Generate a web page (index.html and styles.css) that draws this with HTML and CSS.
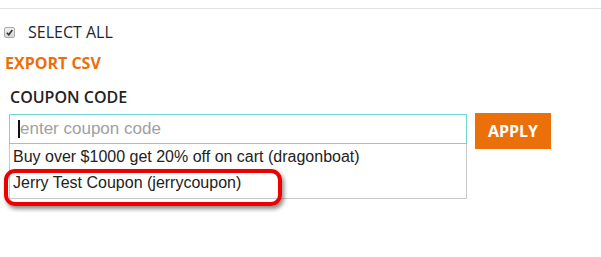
FILE: index.html
```html
<!DOCTYPE html>
<html>
<head>
<meta charset="utf-8">
<link rel="stylesheet" href="styles.css">
</head>
<body>
<div class="page">
  <div class="rule"></div>
  <label class="select-all">
    <span class="check"><svg width="7" height="7" viewBox="0 0 7 7"><path d="M0.8 3.8 L2.8 5.8 L6.3 1" fill="none" stroke="#333" stroke-width="1.6"/></svg></span>
    <span>SELECT ALL</span>
  </label>
  <div class="export">EXPORT CSV</div>
  <div class="field-label">COUPON CODE</div>
  <div class="coupon-row">
    <div class="combo">
      <div class="input"><span class="caret"></span><span class="placeholder">enter coupon code</span></div>
      <div class="list">
        <div class="item">Buy over $1000 get 20% off on cart (dragonboat)</div>
        <div class="item">Jerry Test Coupon (jerrycoupon)</div>
      </div>
      <div class="highlight"></div>
    </div>
    <button class="apply">APPLY</button>
  </div>
</div>
</body>
</html>
```

FILE: styles.css
```css
html, body { margin: 0; padding: 0; background: #fff; }
body { min-height: 257px; }
.page { padding-top: 8px; padding-bottom: 40px; font-family: "Open Sans", sans-serif; }
.rule { border-top: 1px solid #e2e2e2; height: 0; }
.select-all { display: flex; align-items: center; margin: 13px 0 0 4px; font-size: 16px; line-height: 20px; color: #1e2530; height: 20px; }
.check { width: 9px; height: 9px; border: 1px solid #aaa; border-radius: 2px; background: linear-gradient(#f2f2f2, #d6d6d6); display: flex; align-items: center; justify-content: center; margin-right: 13px; }
.export { margin: 11px 0 0 5px; color: #eb6f0b; font-weight: 700; font-size: 16px; line-height: 20px; }
.field-label { margin: 14px 0 0 10px; color: #222; font-weight: 600; font-size: 16px; line-height: 20px; }
.coupon-row { display: flex; align-items: flex-start; margin: 7px 0 0 9px; gap: 8px; }
.combo { position: relative; width: 458px; font-family: "Liberation Sans", Arial, sans-serif; }
.input { height: 28px; border: 1px solid #6fd8d0; display: flex; align-items: center; padding-left: 8px; font-size: 17px; }
.caret { width: 2px; height: 18px; background: #111; margin-right: 0; }
.placeholder { color: #a0a0a0; }
.list { border: 1px solid #c8c8c8; border-top: none; height: 54px; padding-left: 3px; }
.item { font-size: 16px; color: #222; line-height: 26px; }
.highlight { position: absolute; left: -5px; top: 55px; width: 270px; height: 29px; border: 4px solid #ee0000; border-radius: 11px; box-shadow: 2px 3px 4px rgba(0,0,0,0.45); }
.apply { margin-top: -1px; width: 76px; height: 36px; border: none; background: #ec700a; color: #fff; font-family: "Open Sans", sans-serif; font-weight: 700; font-size: 16px; padding: 0; }
```
